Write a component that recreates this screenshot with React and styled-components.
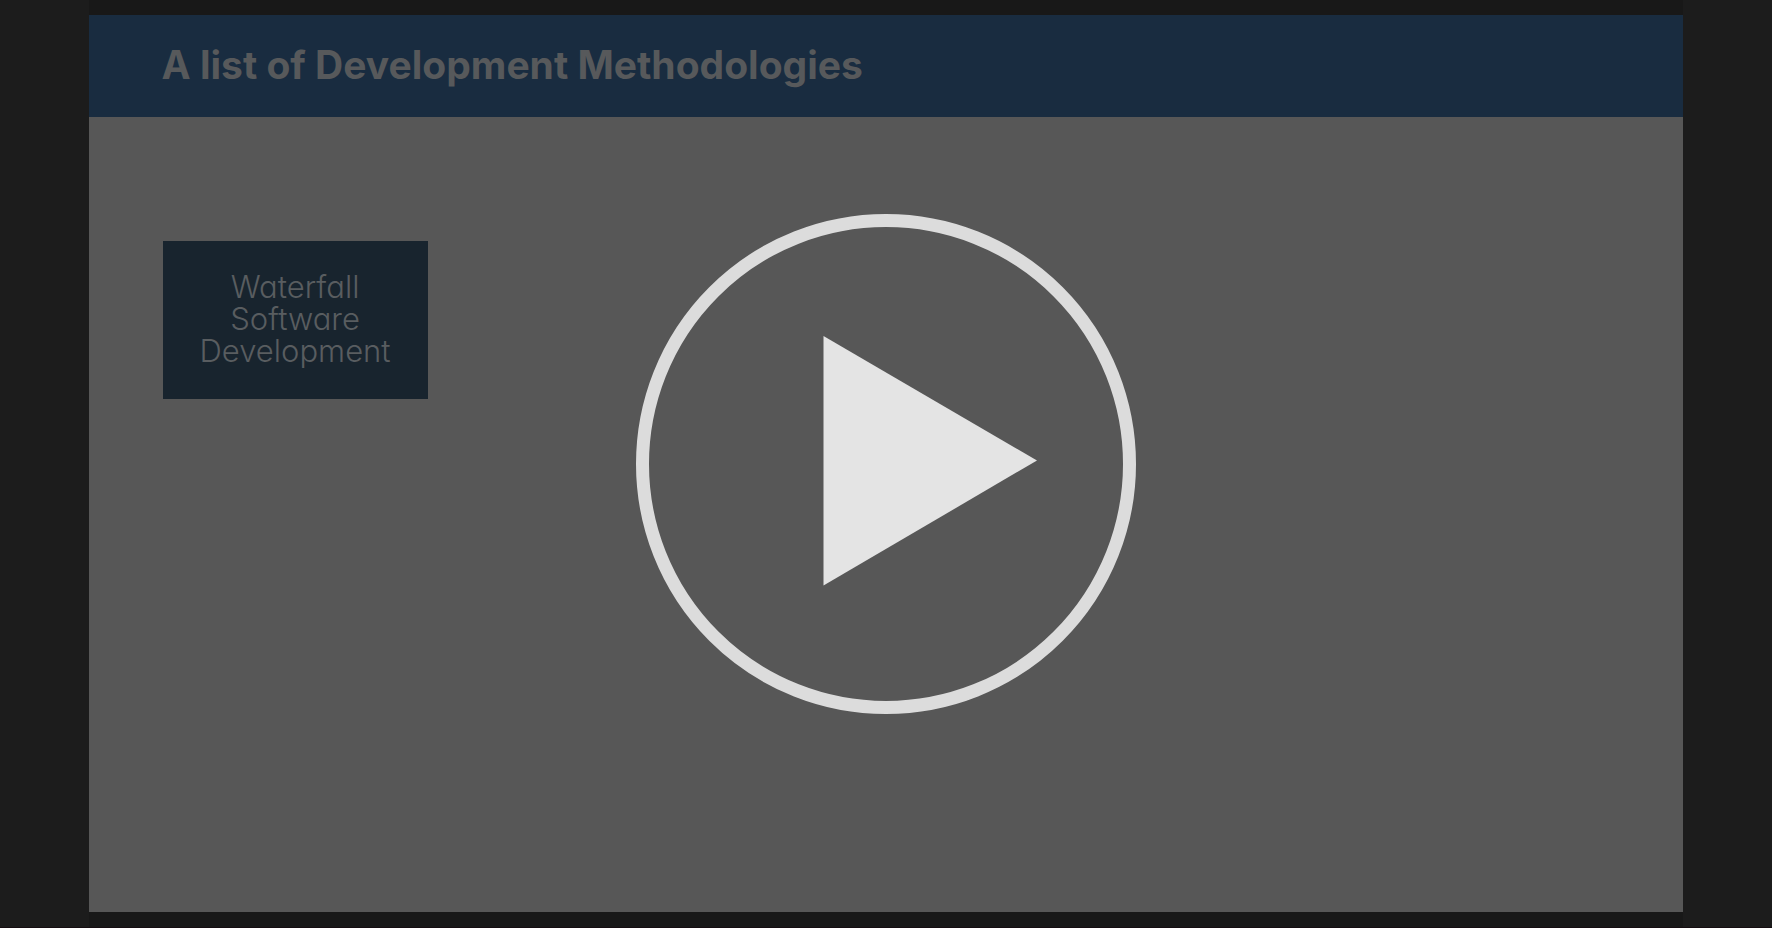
import React from 'react';
import styled, { createGlobalStyle } from 'styled-components';

const GlobalStyle = createGlobalStyle`
  * {
    box-sizing: border-box;
  }

  body {
    margin: 0;
    background-color: #1c1c1c;
    font-family: Inter, 'Open Sans', sans-serif;
    font-feature-settings: 'cv11';
  }
`;

const Player = styled.main`
  position: relative;
  display: flex;
  justify-content: center;
  min-height: 100vh;
  border-bottom: 1px solid #150d11;
`;

const Letterbox = styled.div`
  display: flex;
  flex-direction: column;
  justify-content: center;
  width: 90%;
  background-color: #181818;
`;

const Slide = styled.article`
  display: flex;
  flex-direction: column;
  aspect-ratio: 16 / 9;
  background-color: #575757;
`;

const SlideHeader = styled.header`
  display: flex;
  align-items: center;
  height: 102px;
  padding: 0 73px 2px;
  background-color: #192c40;
`;

const Title = styled.h1`
  margin: 0;
  font-size: 39px;
  font-weight: 700;
  line-height: 48px;
  color: #57595b;
`;

const SlideBody = styled.div`
  display: flex;
  align-items: flex-start;
  padding: 124px 74px;
`;

const Method = styled.div`
  display: flex;
  align-items: center;
  justify-content: center;
  width: 265px;
  height: 158px;
  padding: 0 24px 2px;
  background-color: #18242e;
  font-size: 31px;
  font-weight: 300;
  line-height: 32px;
  text-align: center;
  color: #595d60;
`;

const PlayButton = styled.button`
  position: absolute;
  inset: 0;
  display: flex;
  align-items: center;
  justify-content: center;
  padding: 0;
  border: 0;
  background: none;
  cursor: pointer;
`;

const PlayIcon = styled.svg`
  display: block;
  width: 500px;
  height: 500px;
`;

export default () => (
  <>
    <GlobalStyle />
    <Player>
      <Letterbox>
        <Slide>
          <SlideHeader>
            <Title>A list of Development Methodologies</Title>
          </SlideHeader>
          <SlideBody>
            <Method>Waterfall Software Development</Method>
          </SlideBody>
        </Slide>
      </Letterbox>
      <PlayButton type="button" aria-label="Play">
        <PlayIcon viewBox="0 0 500 500" aria-hidden="true">
          <circle cx="250" cy="250" r="243.5" fill="none" stroke="#dcdcdc" strokeWidth="13" />
          <path d="M187.5 122 L401 246.5 L187.5 371.5 Z" fill="#e4e4e4" />
        </PlayIcon>
      </PlayButton>
    </Player>
  </>
);
